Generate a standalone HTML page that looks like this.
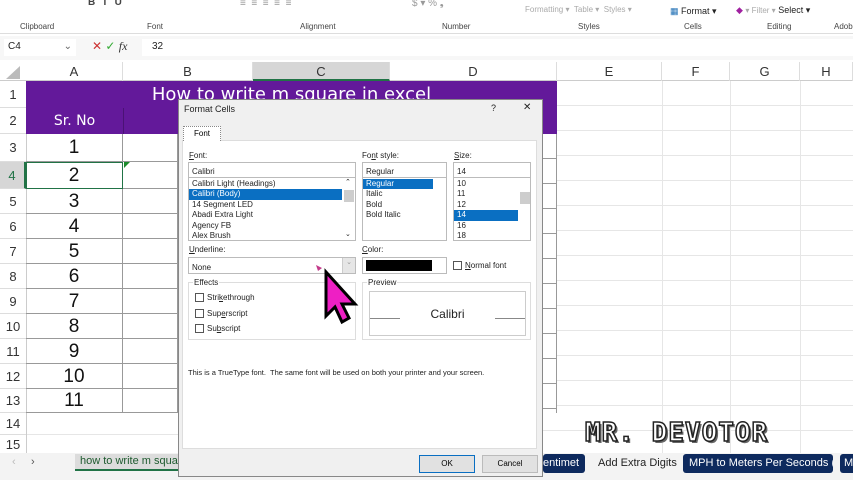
<!DOCTYPE html>
<html><head><style>
*{margin:0;padding:0;box-sizing:border-box}
body{width:853px;height:480px;overflow:hidden;background:#fff;font-family:"Liberation Sans",sans-serif;position:relative;line-height:1.2}
.a{position:absolute}
.t{font-size:8px;color:#444}
.rh{position:absolute;left:0;width:26px;text-align:center;font-size:13px;color:#333;border-bottom:1px solid #ddd}
.ch{position:absolute;top:62px;height:19px;text-align:center;font-size:13px;color:#333;border-right:1px solid #ddd;line-height:19px}
.num{position:absolute;left:26px;width:97px;text-align:center;font-size:19px;color:#111;border-bottom:1px solid #999;border-right:1px solid #999}
.bc{position:absolute;left:123px;width:55px;border-bottom:1px solid #999;border-right:1px solid #999}
.d{font-size:8px;color:#222}
.box{position:absolute;border:1px solid #bbb;background:#fff;line-height:10px}
.cb{display:inline-block;width:9px;height:9px;border:1px solid #555;vertical-align:middle;margin-right:3px}
</style></head><body>
<div class="a" style="left:0;top:0;width:853px;height:34px;background:#fff;border-bottom:1px solid #ddd"></div>
<div class="a t" style="left:20px;top:22px">Clipboard</div>
<div class="a t" style="left:147px;top:22px">Font</div>
<div class="a t" style="left:300px;top:22px">Alignment</div>
<div class="a t" style="left:442px;top:22px">Number</div>
<div class="a t" style="left:578px;top:22px">Styles</div>
<div class="a t" style="left:684px;top:22px">Cells</div>
<div class="a t" style="left:767px;top:22px">Editing</div>
<div class="a t" style="left:834px;top:22px">Adob</div>
<div class="a t" style="left:88px;top:-3px;font-weight:bold;font-size:10px">B &nbsp; I &nbsp; U</div>
<div class="a t" style="left:525px;top:5px;color:#aaa">Formatting ▾ &nbsp;Table ▾ &nbsp;Styles ▾</div>
<div class="a t" style="left:670px;top:6px;font-size:9px;color:#222"><span style="color:#1f6fb4">▦</span> Format ▾</div>
<div class="a t" style="left:736px;top:5px;font-size:9px;color:#a020a0">◆ <span style="color:#aaa;font-size:8px">▾ Filter ▾</span> <span style="color:#222">Select ▾</span></div>
<div class="a t" style="left:240px;top:-2px;font-size:10px;color:#999">≡ &nbsp;≡ &nbsp;≡ &nbsp;≡ &nbsp;≡</div>
<div class="a t" style="left:412px;top:-2px;font-size:10px;color:#999">$ ▾ % ❟</div>
<div class="a" style="left:0;top:36px;width:853px;height:24px;background:#f7f7f7"></div>
<div class="a" style="left:4px;top:39px;width:72px;height:17px;background:#fff;font-size:10px;padding:2px 4px;color:#222">C4<span style="float:right;color:#666">⌄</span></div>
<div class="a" style="left:92px;top:39px;font-size:12px;color:#c33">✕ <span style="color:#3a3">✓</span> <i style="color:#333;font-family:'Liberation Serif'">fx</i></div>
<div class="a" style="left:142px;top:39px;width:711px;height:17px;background:#fff;font-size:10px;padding:2px 10px;color:#222">32</div>
<div class="a" style="left:0;top:62px;width:853px;height:19px;background:#fff;border-bottom:1px solid #ccc"></div>
<div class="ch" style="left:26px;width:97px">A</div>
<div class="ch" style="left:123px;width:130px">B</div>
<div class="ch" style="left:253px;width:137px;background:#d6d6d6;border-bottom:2px solid #217346">C</div>
<div class="ch" style="left:390px;width:167px">D</div>
<div class="ch" style="left:557px;width:105px">E</div>
<div class="ch" style="left:662px;width:68px">F</div>
<div class="ch" style="left:730px;width:70px">G</div>
<div class="ch" style="left:800px;width:53px">H</div>
<div class="a" style="left:6px;top:66px;width:0;height:0;border-left:14px solid transparent;border-bottom:13px solid #bbb"></div>
<div class="a" style="left:543px;top:81px;width:310px;height:372px;background:repeating-linear-gradient(#fff 0 24px,#e6e6e6 24px 25px)"></div>
<div class="a" style="left:662px;top:81px;width:1px;height:372px;background:#e6e6e6"></div>
<div class="a" style="left:730px;top:81px;width:1px;height:372px;background:#e6e6e6"></div>
<div class="a" style="left:800px;top:81px;width:1px;height:372px;background:#e6e6e6"></div>
<div class="a" style="left:26px;top:413px;width:517px;height:40px;background:repeating-linear-gradient(#fff 0 21px,#e6e6e6 21px 22px)"></div>
<div class="rh" style="top:81px;height:27px;line-height:27px">1</div>
<div class="rh" style="top:108px;height:26px;line-height:26px">2</div>
<div class="rh" style="top:134px;height:28px;line-height:28px">3</div>
<div class="rh" style="top:162px;height:27px;line-height:27px;background:#d6d6d6;color:#217346;border-right:2px solid #217346">4</div>
<div class="rh" style="top:189px;height:25px;line-height:25px">5</div>
<div class="rh" style="top:214px;height:25px;line-height:25px">6</div>
<div class="rh" style="top:239px;height:25px;line-height:25px">7</div>
<div class="rh" style="top:264px;height:25px;line-height:25px">8</div>
<div class="rh" style="top:289px;height:25px;line-height:25px">9</div>
<div class="rh" style="top:314px;height:25px;line-height:25px">10</div>
<div class="rh" style="top:339px;height:25px;line-height:25px">11</div>
<div class="rh" style="top:364px;height:25px;line-height:25px">12</div>
<div class="rh" style="top:389px;height:24px;line-height:24px">13</div>
<div class="rh" style="top:413px;height:22px;line-height:22px">14</div>
<div class="rh" style="top:435px;height:20px;line-height:20px">15</div>
<div class="a" style="left:26px;top:81px;width:1px;height:372px;background:#ccc"></div>
<div class="a" style="left:26px;top:81px;width:531px;height:53px;background:#63199a"></div>
<div class="a" style="left:123px;top:108px;width:1px;height:26px;background:#4a1275"></div>
<div class="a" style="left:26px;top:84px;width:531px;text-align:center;font-size:18px;color:#fff;font-family:'DejaVu Sans',sans-serif">How to write m square in excel</div>
<div class="a" style="left:26px;top:113px;width:97px;text-align:center;font-size:14px;color:#fff;font-family:'DejaVu Sans',sans-serif">Sr. No</div>
<div class="num" style="top:134px;height:28px;line-height:28px">1</div>
<div class="num" style="top:162px;height:27px;line-height:27px">2</div>
<div class="num" style="top:189px;height:25px;line-height:25px">3</div>
<div class="num" style="top:214px;height:25px;line-height:25px">4</div>
<div class="num" style="top:239px;height:25px;line-height:25px">5</div>
<div class="num" style="top:264px;height:25px;line-height:25px">6</div>
<div class="num" style="top:289px;height:25px;line-height:25px">7</div>
<div class="num" style="top:314px;height:25px;line-height:25px">8</div>
<div class="num" style="top:339px;height:25px;line-height:25px">9</div>
<div class="num" style="top:364px;height:25px;line-height:25px">10</div>
<div class="num" style="top:389px;height:24px;line-height:24px">11</div>
<div class="bc" style="top:134px;height:28px"></div><div class="bc" style="top:162px;height:27px"></div>
<div class="bc" style="top:189px;height:25px"></div><div class="bc" style="top:214px;height:25px"></div>
<div class="bc" style="top:239px;height:25px"></div><div class="bc" style="top:264px;height:25px"></div>
<div class="bc" style="top:289px;height:25px"></div><div class="bc" style="top:314px;height:25px"></div>
<div class="bc" style="top:339px;height:25px"></div><div class="bc" style="top:364px;height:25px"></div>
<div class="bc" style="top:389px;height:24px"></div>
<div class="a" style="left:543px;top:134px;width:14px;height:279px;background:repeating-linear-gradient(#fff 0 24px,#999 24px 25px);border-right:1px solid #999"></div>
<div class="a" style="left:124px;top:162px;width:0;height:0;border-top:6px solid #1a8a2a;border-right:6px solid transparent"></div>
<div class="a" style="left:26px;top:162px;width:97px;height:27px;border:1px solid #217346"></div>
<div class="a" style="left:0;top:453px;width:853px;height:27px;background:#f3f3f3"></div>
<div class="a" style="left:12px;top:456px;font-size:11px;color:#bbb">‹ &nbsp; &nbsp; <span style="color:#555">›</span></div>
<div class="a" style="left:75px;top:454px;width:110px;height:17px;background:#dcdcdc;border-bottom:2px solid #217346;font-size:11px;padding:1px 5px;color:#1d5a2e;overflow:hidden;white-space:nowrap">how to write m square</div>
<div class="a" style="left:543px;top:454px;width:42px;height:19px;background:#0e2a5e;border-radius:3px;font-size:11px;color:#fff;padding:3px 0;overflow:hidden;white-space:nowrap">entimet</div>
<div class="a" style="left:598px;top:457px;font-size:11px;color:#222">Add Extra Digits</div>
<div class="a" style="left:683px;top:454px;width:150px;height:19px;background:#0e2a5e;border-radius:3px;font-size:11px;color:#fff;padding:3px 6px;white-space:nowrap;overflow:hidden">MPH to Meters Per Seconds (2)</div>
<div class="a" style="left:840px;top:454px;width:20px;height:19px;background:#0e2a5e;border-radius:3px;font-size:11px;color:#fff;padding:3px 4px">M</div>
<div class="a" style="left:585px;top:418px;font-size:26px;font-weight:bold;color:#fff;letter-spacing:1px;font-family:'DejaVu Sans Mono',monospace;-webkit-text-stroke:1.5px #222;text-shadow:2px 2px 0 #666">MR. DEVOTOR</div>
<div class="a" style="left:178px;top:99px;width:365px;height:378px;background:#f0f0f0;border:1px solid #888"></div>
<div class="a" style="left:182px;top:140px;width:355px;height:309px;background:#fff;border:1px solid #ddd"></div>
<div class="a d" style="left:184px;top:104px;font-size:9px">Format Cells</div>
<div class="a d" style="left:491px;top:103px;font-size:9px">?</div>
<div class="a d" style="left:523px;top:102px;font-size:10px">✕</div>
<div class="a" style="left:183px;top:126px;width:38px;height:15px;background:#fff;border:1px dotted #888;border-bottom:none;font-size:8px;text-align:center;line-height:14px">Font</div>
<div class="a d" style="left:189px;top:151px"><u>F</u>ont:</div>
<div class="a d" style="left:362px;top:151px">Fo<u>n</u>t style:</div>
<div class="a d" style="left:454px;top:151px"><u>S</u>ize:</div>
<div class="box" style="left:188px;top:162px;width:168px;height:16px;padding:2px 3px"><span class="d">Calibri</span></div>
<div class="box" style="left:362px;top:162px;width:85px;height:16px;padding:2px 3px"><span class="d">Regular</span></div>
<div class="box" style="left:453px;top:162px;width:78px;height:16px;padding:2px 3px"><span class="d">14</span></div>
<div class="box" style="left:188px;top:177px;width:168px;height:64px;line-height:10.4px;padding-top:1px">
<div class="d" style="padding-left:3px">Calibri Light (Headings)</div>
<div class="d" style="padding-left:3px;background:#0a6fc2;color:#fff;width:153px">Calibri (Body)</div>
<div class="d" style="padding-left:3px">14 Segment LED</div>
<div class="d" style="padding-left:3px">Abadi Extra Light</div>
<div class="d" style="padding-left:3px">Agency FB</div>
<div class="d" style="padding-left:3px">Alex Brush</div>
<div class="a" style="left:155px;top:12px;width:10px;height:12px;background:#cdcdcd"></div>
<div class="a d" style="left:156px;top:0;font-size:7px">⌃</div><div class="a d" style="left:156px;top:52px;font-size:7px">⌄</div>
</div>
<div class="box" style="left:362px;top:177px;width:85px;height:64px;line-height:10.4px;padding-top:1px">
<div class="d" style="padding-left:3px;background:#0a6fc2;color:#fff;width:70px">Regular</div>
<div class="d" style="padding-left:3px">Italic</div>
<div class="d" style="padding-left:3px">Bold</div>
<div class="d" style="padding-left:3px">Bold Italic</div>
</div>
<div class="box" style="left:453px;top:177px;width:78px;height:64px;line-height:10.4px;padding-top:1px">
<div class="d" style="padding-left:3px">10</div><div class="d" style="padding-left:3px">11</div><div class="d" style="padding-left:3px">12</div>
<div class="d" style="padding-left:3px;background:#0a6fc2;color:#fff;width:64px">14</div>
<div class="d" style="padding-left:3px">16</div><div class="d" style="padding-left:3px">18</div>
<div class="a" style="left:66px;top:14px;width:10px;height:12px;background:#cdcdcd"></div>
</div>
<div class="a d" style="left:189px;top:245px"><u>U</u>nderline:</div>
<div class="a d" style="left:362px;top:245px"><u>C</u>olor:</div>
<div class="box" style="left:188px;top:257px;width:168px;height:17px;padding:3px 3px"><span class="d">None</span><div class="a" style="right:0;top:0;width:13px;height:15px;background:#e6e6e6;border-left:1px solid #ccc;font-size:7px;color:#999;text-align:center">⌄</div></div>
<div class="box" style="left:362px;top:257px;width:85px;height:17px"><div class="a" style="left:3px;top:2px;width:66px;height:11px;background:#000"></div></div>
<div class="a d" style="left:453px;top:261px"><span class="cb"></span><u>N</u>ormal font</div>
<div class="a" style="left:188px;top:282px;width:168px;height:58px;border:1px solid #ddd"></div>
<div class="a d" style="left:193px;top:278px;background:#fff;padding:0 1px">Effects</div>
<div class="a d" style="left:195px;top:293px"><span class="cb"></span>Stri<u>k</u>ethrough</div>
<div class="a d" style="left:195px;top:309px"><span class="cb"></span>Sup<u>e</u>rscript</div>
<div class="a d" style="left:195px;top:324px"><span class="cb"></span>Su<u>b</u>script</div>
<div class="a" style="left:362px;top:282px;width:169px;height:58px;border:1px solid #ddd"></div>
<div class="a d" style="left:367px;top:278px;background:#fff;padding:0 1px">Preview</div>
<div class="a" style="left:369px;top:291px;width:157px;height:45px;border:1px solid #ccc"></div>
<div class="a" style="left:370px;top:318px;width:30px;height:1px;background:#888"></div>
<div class="a" style="left:495px;top:318px;width:30px;height:1px;background:#888"></div>
<div class="a" style="left:370px;top:307px;width:155px;text-align:center;font-size:12px;color:#222">Calibri</div>
<div class="a d" style="left:188px;top:368px;font-size:7.5px">This is a TrueType font.&nbsp; The same font will be used on both your printer and your screen.</div>
<div class="a" style="left:419px;top:455px;width:56px;height:18px;background:#e1e1e1;border:1px solid #0a6fc2;font-size:8px;text-align:center;line-height:16px">OK</div>
<div class="a" style="left:482px;top:455px;width:56px;height:18px;background:#e1e1e1;border:1px solid #bbb;font-size:8px;text-align:center;line-height:16px">Cancel</div>
<svg class="a" style="left:315px;top:264px" width="50" height="62" viewBox="0 0 50 62">
<path d="M1 1 L7 4 L3 7 Z" fill="#c33a8a"/>
<path d="M11 8 L11 52 L20 43 L27 58 L34 54 L27 40 L40 40 Z" fill="#ee1fc4" stroke="#000" stroke-width="3" stroke-linejoin="miter"/>
</svg>
</body></html>
